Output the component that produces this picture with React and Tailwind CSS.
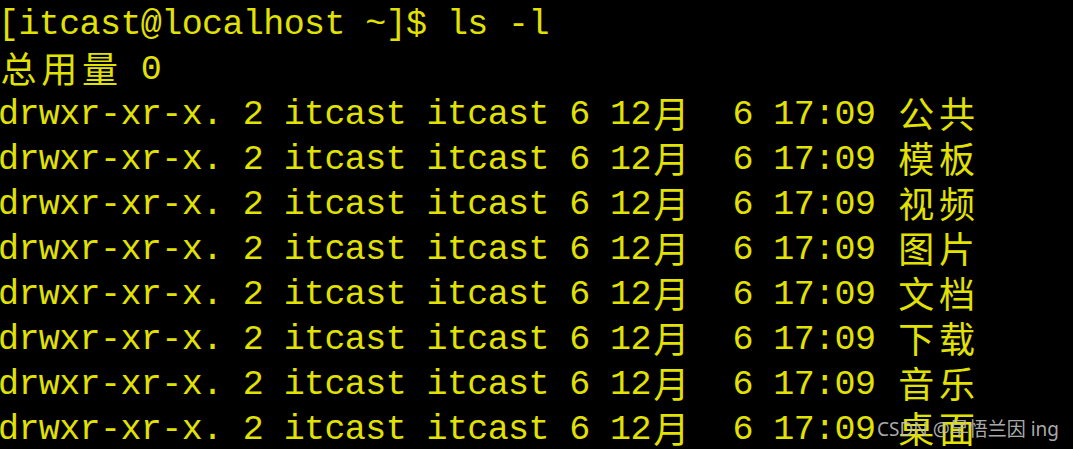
const LINES = [
  '[itcast@localhost ~]$ ls -l',
  '总用量 0',
  'drwxr-xr-x. 2 itcast itcast 6 12月  6 17:09 公共',
  'drwxr-xr-x. 2 itcast itcast 6 12月  6 17:09 模板',
  'drwxr-xr-x. 2 itcast itcast 6 12月  6 17:09 视频',
  'drwxr-xr-x. 2 itcast itcast 6 12月  6 17:09 图片',
  'drwxr-xr-x. 2 itcast itcast 6 12月  6 17:09 文档',
  'drwxr-xr-x. 2 itcast itcast 6 12月  6 17:09 下载',
  'drwxr-xr-x. 2 itcast itcast 6 12月  6 17:09 音乐',
  'drwxr-xr-x. 2 itcast itcast 6 12月  6 17:09 桌面',
]

// split a line into latin runs and double-width CJK cells
function Line({ text }) {
  const parts = []
  let run = ''
  for (const ch of text) {
    if (ch.charCodeAt(0) > 0x2e80) {
      if (run) parts.push({ t: run })
      run = ''
      parts.push({ t: ch, cjk: true })
    } else {
      run += ch
    }
  }
  if (run) parts.push({ t: run })

  return (
    <div className="h-[45px] leading-[45px] whitespace-pre flex items-center">
      {parts.map((p, i) =>
        p.cjk ? (
          <span
            key={i}
            className="inline-block w-[40.8px] text-center text-[36px] -translate-y-[3px] font-['Noto_Sans_CJK_SC',sans-serif] font-normal"
          >
            {p.t}
          </span>
        ) : (
          <span key={i} className="text-[35px] tracking-[-0.6px] font-['Liberation_Mono',monospace]">
            {p.t}
          </span>
        )
      )}
    </div>
  )
}

export default function App() {
  return (
    <div className="relative w-[1073px] h-[449px] bg-black overflow-hidden">
      <div className="flex flex-col pt-[3px] text-[#e2e200] -ml-[2px]">
        {LINES.map((l, i) => (
          <Line key={i} text={l} />
        ))}
      </div>

      {/* CSDN watermark */}
      <div className="absolute right-[14px] bottom-[10px] text-[19px] leading-none text-[#c0c0c0]/90 font-['Noto_Sans','Noto_Sans_CJK_SC',sans-serif]">
        CSDN @早悟兰因 ing
      </div>
    </div>
  )
}
